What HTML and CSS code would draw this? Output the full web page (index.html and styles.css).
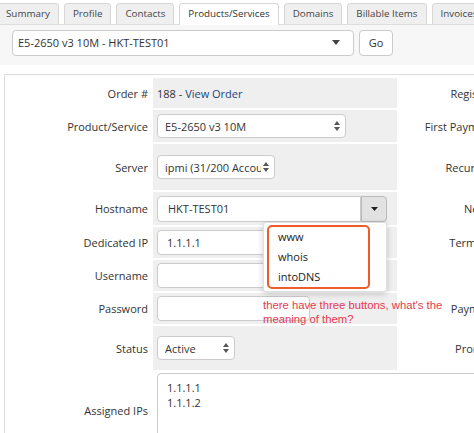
FILE: index.html
```html
<!DOCTYPE html>
<html lang="en">
<head>
    <meta charset="UTF-8">
    <meta name="viewport" content="width=device-width, initial-scale=1.0">
    <title>Products/Services</title>
    <link rel="stylesheet" href="styles.css">
</head>
<body>
    <!-- Client tabs -->
    <div class="tabs">
        <div class="tab">Summary</div>
        <div class="tab">Profile</div>
        <div class="tab">Contacts</div>
        <div class="tab active">Products/Services</div>
        <div class="tab">Domains</div>
        <div class="tab">Billable Items</div>
        <div class="tab">Invoices</div>
    </div>

    <div class="switcher">
        <div class="select big">
            <span class="select-text">E5-2650 v3 10M - HKT-TEST01</span>
            <svg width="8" height="5" viewBox="0 0 8 5"><path d="M0 0h8L4 5z" fill="#444"/></svg>
        </div>
        <div class="btn">Go</div>
    </div>

    <!-- Service details -->
    <div class="panel">
        <table class="form">
            <tr class="r1">
                <td class="fieldlabel">Order #</td>
                <td class="fieldarea">188 - <a href="#" class="link">View Order</a></td>
                <td class="fieldlabel wide">Registration Date</td>
                <td class="fieldarea"></td>
            </tr>
            <tr class="r2">
                <td class="fieldlabel">Product/Service</td>
                <td class="fieldarea">
                    <div class="select product">
                        <span class="select-text">E5-2650 v3 10M</span>
                        <svg width="6" height="10" viewBox="0 0 6 10"><path d="M3 0L6 4H0zM3 10L0 6h6z" fill="#555"/></svg>
                    </div>
                </td>
                <td class="fieldlabel wide">First Payment Amount</td>
                <td class="fieldarea"></td>
            </tr>
            <tr class="r3">
                <td class="fieldlabel">Server</td>
                <td class="fieldarea">
                    <div class="select server">
                        <span class="select-text">ipmi (31/200 Accounts)</span>
                        <svg width="6" height="10" viewBox="0 0 6 10"><path d="M3 0L6 4H0zM3 10L0 6h6z" fill="#555"/></svg>
                    </div>
                </td>
                <td class="fieldlabel wide">Recurring Amount</td>
                <td class="fieldarea"></td>
            </tr>
            <tr class="r4">
                <td class="fieldlabel">Hostname</td>
                <td class="fieldarea">
                    <div class="input-group">
                        <div class="input host">HKT-TEST01</div>
                        <div class="addon">
                            <svg width="7" height="4" viewBox="0 0 7 4"><path d="M0 0h7L3.5 4z" fill="#222"/></svg>
                        </div>
                        <div class="dropdown">
                            <div class="marked">
                                <div class="item">www</div>
                                <div class="item">whois</div>
                                <div class="item">intoDNS</div>
                            </div>
                        </div>
                    </div>
                </td>
                <td class="fieldlabel wide">Next Due Date</td>
                <td class="fieldarea"></td>
            </tr>
            <tr class="r5">
                <td class="fieldlabel">Dedicated IP</td>
                <td class="fieldarea"><div class="input">1.1.1.1</div></td>
                <td class="fieldlabel wide">Termination Date</td>
                <td class="fieldarea"></td>
            </tr>
            <tr class="r6">
                <td class="fieldlabel">Username</td>
                <td class="fieldarea"><div class="input"></div></td>
                <td class="fieldlabel wide">Billing Cycle</td>
                <td class="fieldarea"></td>
            </tr>
            <tr class="r7">
                <td class="fieldlabel">Password</td>
                <td class="fieldarea"><div class="input"></div></td>
                <td class="fieldlabel wide">Payment Method</td>
                <td class="fieldarea"></td>
            </tr>
            <tr class="r8">
                <td class="fieldlabel">Status</td>
                <td class="fieldarea">
                    <div class="select status">
                        <span class="select-text">Active</span>
                        <svg width="6" height="10" viewBox="0 0 6 10"><path d="M3 0L6 4H0zM3 10L0 6h6z" fill="#555"/></svg>
                    </div>
                </td>
                <td class="fieldlabel wide">Promotion Code</td>
                <td class="fieldarea"></td>
            </tr>
            <tr class="r9">
                <td class="fieldlabel">Assigned IPs</td>
                <td class="fieldarea plain" colspan="3">
                    <div class="textarea">1.1.1.1<br>1.1.1.2</div>
                </td>
            </tr>
        </table>
    </div>

    <p class="note">there have three buttons, what's the<br>meaning of them?</p>
</body>
</html>
```

FILE: styles.css
```css
* {
    margin: 0;
    padding: 0;
    box-sizing: border-box;
}
body {
    position: relative;
    width: 474px;
    height: 433px;
    overflow: hidden;
    background: #fff;
    color: #333;
    font-family: "Open Sans", sans-serif;
    font-size: 11px;
}
.tabs {
    display: flex;
    gap: 5px;
    padding-top: 3px;
    margin-left: -3px;
    border-bottom: 1px solid #ddd;
    white-space: nowrap;
}
.tab {
    flex: none;
    height: 21px;
    line-height: 20px;
    padding: 0 8px;
    margin-bottom: -1px;
    background: #efefef;
    border: 1px solid #d6d6d6;
    border-bottom: none;
    border-radius: 4px 4px 0 0;
    color: #444;
    font-size: 9.8px;
}
.tab.active {
    background: #fff;
    color: #333;
    height: 22px;
}
.switcher {
    display: flex;
    align-items: center;
    gap: 5px;
    height: 40px;
    padding: 4px 12px 9px;
    background: #f7f7f7;
}
.select {
    display: flex;
    align-items: center;
    gap: 2px;
    height: 24px;
    padding: 0 5px 0 7px;
    background: #fff;
    border: 1px solid #cbcbcb;
    border-radius: 4px;
    white-space: nowrap;
}
.select-text {
    flex: 1;
    overflow: hidden;
}
.select svg {
    flex: none;
}
.select.big {
    width: 342px;
    height: 26px;
    padding: 0 13px 0 5px;
}
.btn {
    width: 34px;
    height: 26px;
    line-height: 24px;
    text-align: center;
    background: #fff;
    border: 1px solid #cbcbcb;
    border-radius: 4px;
}
.panel {
    width: 820px;
    margin: 9px 0 0 4px;
    padding-top: 1px;
    border: 1px solid #ddd;
    border-right: none;
}
.form {
    border-collapse: separate;
    border-spacing: 0 2px;
}
.form td {
    padding: 0;
    vertical-align: middle;
    white-space: nowrap;
}
.fieldlabel {
    width: 148px;
    padding-right: 5px !important;
    text-align: right;
}
.fieldlabel.wide {
    width: 147px;
}
.fieldarea {
    width: 244px;
    padding-left: 4px !important;
    background: #efefef;
}
.fieldarea.plain {
    background: transparent;
}
.r1 { height: 30px; }
.r2 { height: 32px; }
.r3 { height: 46px; }
.r4 { height: 33px; }
.r5 { height: 31px; }
.r6 { height: 31px; }
.r7 { height: 31px; }
.r8 { height: 44px; }
.link {
    color: #1a4780;
    text-decoration: none;
}
.product { width: 189px; }
.server { width: 118px; }
.status { width: 78px; }
.input {
    width: 153px;
    height: 25px;
    line-height: 23px;
    padding-left: 9px;
    background: #fff;
    border: 1px solid #cbcbcb;
    border-radius: 4px;
}
.input-group {
    position: relative;
    display: flex;
    width: 230px;
}
.input.host {
    width: 204px;
    height: 26px;
    line-height: 24px;
    padding-left: 10px;
    border-radius: 4px 0 0 4px;
}
.addon {
    display: flex;
    align-items: center;
    justify-content: center;
    width: 26px;
    height: 26px;
    background: #e2e2e2;
    border: 1px solid #b9b9b9;
    border-radius: 0 4px 4px 0;
}
.dropdown {
    position: absolute;
    top: 26px;
    right: 0;
    width: 124px;
    padding: 2px 3px;
    background: #fff;
    border: 1px solid rgba(0, 0, 0, 0.12);
    border-radius: 3px;
    box-shadow: 0 2px 6px rgba(0, 0, 0, 0.18);
    z-index: 2;
}
.marked {
    width: 103px;
    border: 2px solid #ef5b2b;
    border-radius: 5px;
    padding-left: 9px;
}
.item {
    line-height: 20px;
    font-size: 11px;
    color: #222;
}
.textarea {
    width: 420px;
    height: 76px;
    margin-top: 1px;
    padding: 6px 9px;
    line-height: 15px;
    background: #fff;
    border: 1px solid #cbcbcb;
    border-radius: 4px;
}
.note {
    position: absolute;
    left: 263px;
    top: 298px;
    color: #e8384f;
    font-family: "Liberation Sans", Arial, sans-serif;
    font-size: 11.3px;
    line-height: 14px;
    z-index: 3;
}
```
